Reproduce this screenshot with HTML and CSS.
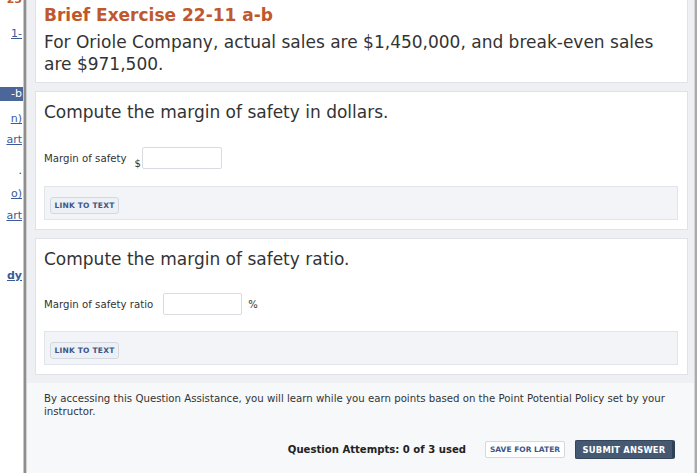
FILE: index.html
```html
<!DOCTYPE html>
<html>
<head>
<meta charset="utf-8">
<link rel="stylesheet" href="styles.css">
</head>
<body>
<div class="page">
  <aside class="side">
    <div class="s-item s-orange s-first">25</div>
    <div class="s-item s-link s-2">1-</div>
    <div class="s-item s-active s-3">-b</div>
    <div class="s-item s-link-plain s-4">n)</div>
    <div class="s-item s-link s-5">art</div>
    <div class="s-item s-dot s-6">.</div>
    <div class="s-item s-link-plain s-7">o)</div>
    <div class="s-item s-link s-8">art</div>
    <div class="s-item s-link s-bold s-9">dy</div>
  </aside>
  <div class="divider"></div>
  <main class="main">
    <section class="panel intro">
      <h1 class="title">Brief Exercise 22-11 a-b</h1>
      <p class="lead">For Oriole Company, actual sales are $1,450,000, and break-even sales are $971,500.</p>
    </section>

    <section class="panel part part-a">
      <h2 class="question">Compute the margin of safety in dollars.</h2>
      <div class="field-row">
        <span class="label">Margin of safety</span>
        <span class="unit unit-dollar">$</span>
        <span class="input"></span>
      </div>
      <div class="link-box">
        <span class="btn-link">LINK TO TEXT</span>
      </div>
    </section>

    <section class="panel part part-b">
      <h2 class="question">Compute the margin of safety ratio.</h2>
      <div class="field-row">
        <span class="label">Margin of safety ratio</span>
        <span class="input input-ratio"></span>
        <span class="unit unit-pct">%</span>
      </div>
      <div class="link-box">
        <span class="btn-link">LINK TO TEXT</span>
      </div>
    </section>

    <div class="footer">
      <p class="notice">By accessing this Question Assistance, you will learn while you earn points based on the Point Potential Policy set by your instructor.</p>
      <div class="actions">
        <span class="attempts">Question Attempts: 0 of 3 used</span>
        <span class="btn-save">SAVE FOR LATER</span>
        <span class="btn-submit">SUBMIT ANSWER</span>
      </div>
    </div>
  </main>
  <div class="rborder"></div>
  <div class="rwhite"></div>
</div>
</body>
</html>
```

FILE: styles.css
```css
* { box-sizing: border-box; }
html, body { margin: 0; padding: 0; }
body {
  width: 700px;
  height: 473px;
  overflow: hidden;
  background: #ffffff;
  font-family: "DejaVu Sans", Verdana, sans-serif;
  color: #333333;
}
.page {
  display: flex;
  height: 473px;
}
.side {
  width: 23px;
  flex: none;
  background: #ffffff;
  overflow: hidden;
  display: flex;
  flex-direction: column;
  align-items: flex-end;
}
.s-item {
  font-size: 11px;
  line-height: 14px;
  height: 14px;
  white-space: nowrap;
  padding-right: 1px;
}
.s-orange { color: #c0582d; font-weight: bold; }
.s-link { color: #3b5b98; text-decoration: underline; }
.s-link-plain { color: #3b5b98; text-decoration: underline; }
.s-bold { font-weight: bold; }
.s-dot { color: #333; }
.s-active {
  background: #4b6699;
  color: #ffffff;
  width: 23px;
  text-align: right;
  padding-right: 1px;
}
.s-first { margin-top: -7px; }
.s-2 { margin-top: 20px; }
.s-3 { margin-top: 46px; }
.s-4 { margin-top: 11px; }
.s-5 { margin-top: 7px; }
.s-6 { margin-top: 17px; }
.s-7 { margin-top: 9px; }
.s-8 { margin-top: 8px; }
.s-9 { margin-top: 46px; }

.divider {
  width: 4px;
  flex: none;
  background: #8e8e8e;
  border-left: 1px solid #c9c9c9;
  border-right: 1px solid #d2d2d2;
}
.main {
  flex: 1;
  background: #eef0f3;
  padding: 0 6px 0 8px;
  display: flex;
  flex-direction: column;
  gap: 8px;
}
.panel {
  background: #ffffff;
  border: 1px solid #dfe2e7;
  padding: 0 9px 0 8px;
}
.intro {
  border-top: none;
  padding-top: 4px;
  padding-bottom: 6px;
  height: 83px;
}
.title {
  margin: 0;
  font-size: 17px;
  line-height: 22px;
  font-weight: bold;
  color: #c0582d;
}
.lead {
  margin: 5px 0 0 0;
  font-size: 17px;
  line-height: 22px;
  color: #333333;
}
.part {
  padding-top: 9px;
  padding-bottom: 9px;
}
.question {
  margin: 0;
  font-size: 17px;
  line-height: 22px;
  font-weight: normal;
  color: #333333;
}
.field-row {
  display: flex;
  align-items: center;
  margin-top: 24px;
  height: 22px;
}
.part-b .field-row { margin-top: 23px; }
.label {
  font-size: 10.2px;
  color: #333;
}
.unit {
  font-size: 10px;
  color: #333;
}
.unit-dollar {
  margin-left: 8px;
  margin-right: 1px;
  align-self: flex-end;
  line-height: 14px;
  margin-bottom: -2px;
}
.input {
  width: 80px;
  height: 22px;
  background: #ffffff;
  border: 1px solid #d8dce1;
  border-radius: 2px;
}
.input-ratio { width: 79px; margin-left: 10px; }
.unit-pct { margin-left: 6px; }
.link-box {
  margin-top: 17px;
  height: 34px;
  background: #f3f4f7;
  border: 1px solid #e1e4e8;
  padding: 6px 0 0 5px;
}
.part-b .link-box { margin-top: 16px; }
.btn-link {
  display: inline-flex;
  align-items: center;
  justify-content: center;
  width: 69px;
  height: 17px;
  background: #edf0f5;
  border: 1px solid #d3d9e2;
  border-radius: 3px;
  font-size: 7.5px;
  font-weight: bold;
  letter-spacing: 0.2px;
  color: #3c5788;
}
.footer {
  flex: 1;
  background: #f7f8fa;
  margin: 0 -6px 0 -8px;
  padding: 9px 19px 0 17px;
}
.notice {
  margin: 0;
  font-size: 10.2px;
  line-height: 13px;
  color: #333333;
}
.actions {
  display: flex;
  justify-content: flex-end;
  align-items: center;
  margin-top: 22px;
  gap: 10px;
}
.attempts {
  font-size: 10.1px;
  font-weight: bold;
  color: #222222;
  margin-right: 9px;
}
.btn-save {
  display: inline-flex;
  align-items: center;
  justify-content: center;
  width: 80px;
  height: 17px;
  background: #ffffff;
  border: 1px solid #d3d9e2;
  border-radius: 2px;
  font-size: 7.5px;
  font-weight: bold;
  color: #3c5788;
}
.btn-submit {
  display: inline-flex;
  align-items: center;
  justify-content: center;
  width: 100px;
  height: 19px;
  background: #455a72;
  border: 1px solid #33465c;
  border-right: 3px solid #2f4156;
  border-radius: 2px;
  font-size: 8.4px;
  font-weight: bold;
  color: #ffffff;
  letter-spacing: 0.2px;
}
.rborder {
  width: 3px;
  flex: none;
  background: #a9abae;
  border-left: 1px solid #d6d7d9;
}
.rwhite {
  width: 3px;
  flex: none;
  background: #ffffff;
}
```
